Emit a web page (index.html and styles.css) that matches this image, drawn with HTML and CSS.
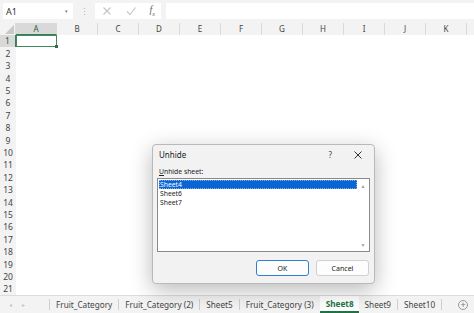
FILE: index.html
```html
<!DOCTYPE html>
<html>
<head>
<meta charset="utf-8">
<link rel="stylesheet" href="styles.css">
</head>
<body>
<div class="app">
  <div class="toolbar">
    <div class="namebox"><span class="ref">A1</span><span class="caret">&#9662;</span></div>
    <div class="grip">&#8942;</div>
    <div class="fxbox">
      <svg class="ico" width="10" height="10" viewBox="0 0 10 10"><path d="M1.5 1.5 L8.5 8.5 M8.5 1.5 L1.5 8.5" stroke="#c4c4c4" stroke-width="1.1" fill="none"/></svg>
      <svg class="ico" width="10" height="10" viewBox="0 0 10 10"><path d="M1 5.5 L4 8.5 L9.5 1.5" stroke="#c4c4c4" stroke-width="1.1" fill="none"/></svg>
      <span class="fx">f<sub>x</sub></span>
    </div>
    <div class="formula"></div>
  </div>

  <div class="sheet">
    <div class="colheads">
      <div class="corner"><span class="tri"></span></div>
      <div class="ch active">A</div>
      <div class="ch">B</div>
      <div class="ch">C</div>
      <div class="ch">D</div>
      <div class="ch">E</div>
      <div class="ch">F</div>
      <div class="ch">G</div>
      <div class="ch">H</div>
      <div class="ch">I</div>
      <div class="ch">J</div>
      <div class="ch">K</div>
      <div class="ch last"></div>
    </div>
    <div class="body">
      <div class="rowheads">
        <div class="rh active">1</div>
        <div class="rh">2</div>
        <div class="rh">3</div>
        <div class="rh">4</div>
        <div class="rh">5</div>
        <div class="rh">6</div>
        <div class="rh">7</div>
        <div class="rh">8</div>
        <div class="rh">9</div>
        <div class="rh">10</div>
        <div class="rh">11</div>
        <div class="rh">12</div>
        <div class="rh">13</div>
        <div class="rh">14</div>
        <div class="rh">15</div>
        <div class="rh">16</div>
        <div class="rh">17</div>
        <div class="rh">18</div>
        <div class="rh">19</div>
        <div class="rh">20</div>
        <div class="rh">21</div>
      </div>
      <div class="cells">
        <div class="activecell"><span class="handle"></span></div>
      </div>
    </div>
  </div>

  <div class="tabs">
    <div class="nav"><span>&#9666;</span><span>&#9656;</span></div>
    <div class="tab">Fruit_Category</div>
    <div class="tab">Fruit_Category (2)</div>
    <div class="tab">Sheet5</div>
    <div class="tab">Fruit_Category (3)</div>
    <div class="tab current">Sheet8</div>
    <div class="tab">Sheet9</div>
    <div class="tab">Sheet10</div>
    <div class="add"><span class="plus">+</span></div>
  </div>

  <div class="dialog">
    <div class="titlebar">
      <span class="title">Unhide</span>
      <span class="help">?</span>
      <svg class="close" width="10" height="10" viewBox="0 0 10 10"><path d="M1.5 1.5 L8.5 8.5 M8.5 1.5 L1.5 8.5" stroke="#333" stroke-width="1" fill="none"/></svg>
    </div>
    <div class="content">
      <div class="label"><u>U</u>nhide sheet:</div>
      <div class="listbox">
        <div class="items">
          <div class="item sel">Sheet4</div>
          <div class="item">Sheet6</div>
          <div class="item">Sheet7</div>
        </div>
        <div class="scroll">
          <span class="arr">&#9650;</span>
          <span class="arr">&#9660;</span>
        </div>
      </div>
      <div class="buttons">
        <div class="btn primary">OK</div>
        <div class="btn">Cancel</div>
      </div>
    </div>
  </div>
</div>
</body>
</html>
```

FILE: styles.css
```css
* { box-sizing: border-box; }
html, body { margin: 0; padding: 0; }
body {
  width: 474px;
  height: 313px;
  overflow: hidden;
  font-family: "Noto Sans", "Open Sans", sans-serif;
  background: #ffffff;
  color: #333;
}
.app {
  position: relative;
  width: 474px;
  height: 313px;
  display: flex;
  flex-direction: column;
}

/* toolbar */
.toolbar {
  height: 24px;
  background: #f3f3f3;
  display: flex;
  align-items: flex-start;
  padding: 3px 0 0 3px;
}
.namebox {
  width: 70px;
  height: 16px;
  background: #fff;
  display: flex;
  align-items: center;
  justify-content: space-between;
  padding: 0 5px 0 3px;
  font-size: 9px;
  color: #333;
}
.caret { font-size: 5px; color: #777; }
.grip {
  width: 22px;
  height: 16px;
  display: flex;
  align-items: center;
  justify-content: center;
  color: #b5b5b5;
  font-size: 9px;
}
.fxbox {
  width: 66px;
  height: 16px;
  background: #fff;
  display: flex;
  align-items: center;
  justify-content: space-between;
  padding: 0 6px 0 7px;
}
.fx {
  font-family: "Liberation Serif", serif;
  font-style: italic;
  font-size: 10px;
  color: #666;
  line-height: 1;
}
.fx sub { font-size: 6px; }
.formula {
  margin-left: 5px;
  flex: 1;
  height: 16px;
  background: #fff;
}

/* sheet */
.sheet {
  display: flex;
  flex-direction: column;
  height: 272.4px;
}
.colheads {
  display: flex;
  height: 12px;
  background: #f3f3f3;
}
.corner {
  width: 16px;
  position: relative;
  border-right: 1px solid #dadada;
}
.tri {
  position: absolute;
  right: 1px;
  bottom: 1px;
  width: 0;
  height: 0;
  border-left: 9px solid transparent;
  border-bottom: 9px solid #c8c8c8;
}
.ch {
  width: 41px;
  flex: none;
  border-right: 1px solid #dadada;
  font-size: 8px;
  color: #444;
  display: flex;
  align-items: center;
  justify-content: center;
}
.ch.last { flex: 1; border-right: none; }
.ch.active {
  background: #d9d9d9;
  border-bottom: 1px solid #3a7d58;
  color: #2b5d40;
}
.body {
  flex: 1;
  display: flex;
}
.rowheads {
  width: 16px;
  background: #f3f3f3;
  display: flex;
  flex-direction: column;
}
.rh {
  height: 12.4px;
  font-size: 8.5px;
  color: #444;
  display: flex;
  align-items: center;
  justify-content: center;
}
.rh.active {
  background: #d9d9d9;
  border-right: 1px solid #3a7d58;
  color: #2b5d40;
}
.cells {
  flex: 1;
  background: #fff;
}
.activecell {
  position: relative;
  width: 41px;
  height: 12.4px;
  border: 1px solid #3e8a5f;
}
.handle {
  position: absolute;
  right: -2px;
  bottom: -2px;
  width: 3px;
  height: 3px;
  background: #2f6e4a;
}

/* tabs */
.tabs {
  flex: 1;
  background: #f3f3f3;
  border-top: 1px solid #dcdcdc;
  display: flex;
  align-items: stretch;
  font-size: 8.2px;
  color: #444;
}
.nav {
  width: 50px;
  display: flex;
  align-items: center;
  gap: 10px;
  padding-left: 9px;
  color: #c6c6c6;
  font-size: 6px;
  border-right: 1px solid #cfcfcf;
  margin: 3px 0;
}
.tab {
  display: flex;
  align-items: center;
  padding: 0 6px;
  border-right: 1px solid #cfcfcf;
  margin: 3px 0;
  white-space: nowrap;
}
.tab.current {
  margin: 0 0 0 -1px;
  background: #fff;
  color: #217346;
  font-weight: 700;
  border-right: none;
  border-bottom: 2px solid #217346;
  padding: 0 5px 0 6px;
}
.add {
  flex: 1;
  display: flex;
  align-items: center;
  justify-content: flex-end;
  padding-right: 6px;
}
.plus {
  width: 10px;
  height: 10px;
  border: 1px solid #9a9a9a;
  border-radius: 50%;
  display: flex;
  align-items: center;
  justify-content: center;
  font-size: 9px;
  line-height: 1;
  color: #777;
}

/* dialog */
.dialog {
  position: absolute;
  left: 152px;
  top: 144px;
  width: 223px;
  height: 140px;
  background: #f2f2f2;
  border: 1px solid #b9b9b9;
  border-radius: 4px;
  box-shadow: 0 6px 22px rgba(0,0,0,0.28);
  display: flex;
  flex-direction: column;
}
.titlebar {
  height: 19px;
  display: flex;
  align-items: center;
  padding: 0 11px 0 6px;
  font-size: 8px;
  color: #222;
}
.title { flex: 1; }
.help {
  font-size: 8px;
  color: #444;
  margin-right: 21px;
}
.content {
  flex: 1;
  padding: 3px 4px 0 4px;
  display: flex;
  flex-direction: column;
}
.label {
  font-size: 6.8px;
  color: #222;
  padding-left: 2px;
  height: 10px;
  line-height: 10px;
}
.listbox {
  margin-top: 1px;
  height: 74px;
  background: #fff;
  border: 1px solid #8a8a8a;
  display: flex;
  padding: 1px 0 0 1px;
}
.items { flex: 1; }
.item {
  height: 9px;
  line-height: 9px;
  font-size: 6.8px;
  color: #222;
  padding-left: 1px;
}
.item.sel {
  background: #0a64d4;
  color: #fff;
  outline: 1px dotted #7fb0ee;
  outline-offset: -1px;
}
.scroll {
  width: 12px;
  display: flex;
  flex-direction: column;
  justify-content: space-between;
  align-items: center;
  padding: 3px 0 3px;
  color: #a0a0a0;
  font-size: 5px;
}
.buttons {
  display: flex;
  justify-content: flex-end;
  gap: 7px;
  margin-top: 8px;
  padding-right: 1px;
}
.btn {
  width: 53px;
  height: 16px;
  background: #fdfdfd;
  border: 1px solid #d0d0d0;
  border-radius: 3px;
  display: flex;
  align-items: center;
  justify-content: center;
  font-size: 7px;
  color: #222;
}
.btn.primary {
  border: 1.5px solid #2f7fd0;
}
```
